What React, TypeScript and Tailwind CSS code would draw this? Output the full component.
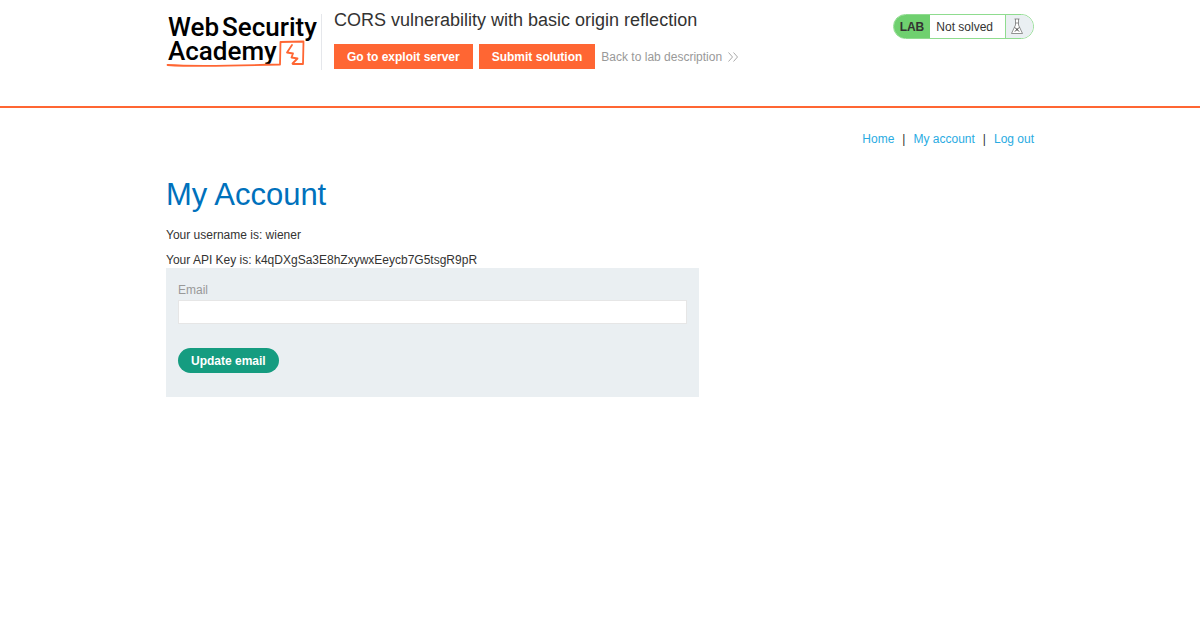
import type { ReactNode } from 'react'

const navLinks = [
  { name: 'Home', href: '#home' },
  { name: 'My account', href: '#my-account' },
  { name: 'Log out', href: '#logout' },
]

function Container({ children }: { children: ReactNode }) {
  return <div className="mx-auto w-full max-w-[868px]">{children}</div>
}

function Logo() {
  return (
    <a
      href="#academy"
      aria-label="Web Security Academy"
      className="block w-[156px] h-14 flex-shrink-0 border-r border-gray-200"
    >
      <svg width="156" height="56" viewBox="0 0 156 56" className="overflow-visible">
        <g fill="#000" fontSize="26" fontWeight="500" fontFamily="Roboto, 'Liberation Sans', sans-serif">
          <text x="2" y="22">Web</text>
          <text x="56" y="22">Security</text>
          <text x="2" y="46">Academy</text>
        </g>
        <g fill="none" stroke="#ff6633" strokeLinejoin="round" strokeLinecap="round" strokeWidth="1.800">
          <path d="M1.500 51C20 52.200 80 51.500 114 50.500L114.500 28L137.500 27.500L137 50L127 50" />
          <path d="M126 31L121 38.500L127 39.500L125.500 43.500L131.500 44.500L126.500 49.500" />
        </g>
      </svg>
    </a>
  )
}

function LabStatus() {
  return (
    <div className="flex items-center h-[25px] rounded-full border border-[#8fdc8f] overflow-hidden flex-shrink-0">
      <span className="flex items-center h-full px-1.5 bg-[#6fd06f] font-bold">LAB</span>
      <span className="flex items-center h-full pl-1.5 pr-3">Not solved</span>
      <span className="flex items-center h-full w-7 pl-1 border-l border-[#8fdc8f] bg-[#eaeff2]">
        <svg width="14" height="17" viewBox="0 0 14 17" fill="none" stroke="#777" strokeWidth="0.800">
          <path d="M4.500 1H9.500M5.500 1V7L1.500 15.500H12.500L8.500 7V1M5.500 5H8.500" fill="#fff" />
          <path d="M5 9.500L9 13.500M9 9.500L5 13.500" stroke="#333" strokeWidth="1" />
        </svg>
      </span>
    </div>
  )
}

export default function App() {
  return (
    <div className="min-h-screen bg-white text-[12px] leading-4 text-[#333332] font-['Liberation_Sans',Arial,sans-serif]">
      <header className="h-[108px] pt-3.5 border-b-2 border-[#ff6633]">
        <Container>
          <div className="flex items-start">
            <Logo />
            <div className="flex-1 pl-3">
              <h2 className="-mt-1 text-[18px] leading-5">CORS vulnerability with basic origin reflection</h2>
              <div className="flex items-center gap-1.5 mt-3.5">
                <button className="h-[25px] px-[13px] bg-[#ff6633] text-white font-bold cursor-pointer">
                  Go to exploit server
                </button>
                <button className="h-[25px] px-[13px] bg-[#ff6633] text-white font-bold cursor-pointer">
                  Submit solution
                </button>
                <a href="#description" className="flex items-center gap-1.5 text-[#999]">
                  Back to lab description
                  <svg width="10" height="10" viewBox="0 0 10 10" fill="none" stroke="#aaa">
                    <path d="M0.500 0.500L4.500 5L0.500 9.500M5.500 0.500L9.500 5L5.500 9.500" />
                  </svg>
                </a>
              </div>
            </div>
            <LabStatus />
          </div>
        </Container>
      </header>

      <Container>
        <nav className="flex justify-end gap-2 pt-[23px]">
          {navLinks.map((link, i) => (
            <span key={link.name} className="flex gap-2">
              {i > 0 && <span>|</span>}
              <a href={link.href} className="text-[#29abe2]">
                {link.name}
              </a>
            </span>
          ))}
        </nav>

        <main>
          <h1 className="mt-7 text-[31px] leading-10 text-[#0071bc]">My Account</h1>
          <p className="mt-3">Your username is: wiener</p>
          <p className="mt-[9px]">Your API Key is: k4qDXgSa3E8hZxywxEeycb7G5tsgR9pR</p>

          <form
            className="max-w-[533px] px-3 pt-3.5 pb-6 bg-[#eaeff2]"
            onSubmit={(e) => e.preventDefault()}
          >
            <label htmlFor="email" className="block text-[#999]">
              Email
            </label>
            <input
              id="email"
              type="email"
              className="block w-full h-6 mt-0.5 px-2 bg-white border border-[#e6e6e6] outline-none"
            />
            <button
              type="submit"
              className="h-[25px] mt-6 px-[13px] rounded-full bg-[#159c80] text-white font-bold cursor-pointer"
            >
              Update email
            </button>
          </form>
        </main>
      </Container>
    </div>
  )
}
